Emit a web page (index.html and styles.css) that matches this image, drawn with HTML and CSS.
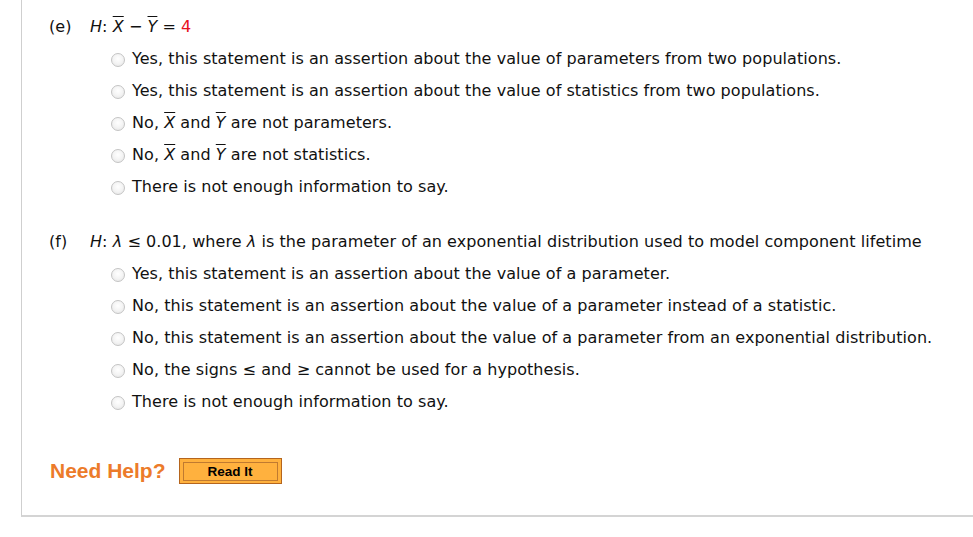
FILE: index.html
```html
<!DOCTYPE html>
<html>
<head>
<meta charset="utf-8">
<link rel="stylesheet" href="styles.css">
</head>
<body>
<div class="panel">
  <div class="part">
    <div class="q"><span class="lbl">(e)</span><span><i>H</i>: <i class="ov">X</i> &minus; <i class="ov">Y</i> = <span class="red">4</span></span></div>
    <div class="opts">
      <div class="opt"><span class="radio"></span><span>Yes, this statement is an assertion about the value of parameters from two populations.</span></div>
      <div class="opt"><span class="radio"></span><span>Yes, this statement is an assertion about the value of statistics from two populations.</span></div>
      <div class="opt"><span class="radio"></span><span>No, <i class="ov">X</i> and <i class="ov">Y</i> are not parameters.</span></div>
      <div class="opt"><span class="radio"></span><span>No, <i class="ov">X</i> and <i class="ov">Y</i> are not statistics.</span></div>
      <div class="opt"><span class="radio"></span><span>There is not enough information to say.</span></div>
    </div>
  </div>
  <div class="part part-f">
    <div class="q"><span class="lbl">(f)</span><span><i>H</i>: <i>&lambda;</i> &le; 0.01, where <i>&lambda;</i> is the parameter of an exponential distribution used to model component lifetime</span></div>
    <div class="opts">
      <div class="opt"><span class="radio"></span><span>Yes, this statement is an assertion about the value of a parameter.</span></div>
      <div class="opt"><span class="radio"></span><span>No, this statement is an assertion about the value of a parameter instead of a statistic.</span></div>
      <div class="opt"><span class="radio"></span><span>No, this statement is an assertion about the value of a parameter from an exponential distribution.</span></div>
      <div class="opt"><span class="radio"></span><span>No, the signs &le; and &ge; cannot be used for a hypothesis.</span></div>
      <div class="opt"><span class="radio"></span><span>There is not enough information to say.</span></div>
    </div>
  </div>
  <div class="help">
    <span class="need">Need Help?</span>
    <span class="btn"><span class="btn-in">Read It</span></span>
  </div>
</div>
</body>
</html>
```
FILE: styles.css
```css
html, body {
  margin: 0;
  padding: 0;
  background: #fff;
}
.panel {
  margin-left: 21px;
  height: 517px;
  box-sizing: border-box;
  border-left: 1px solid #cfcfcf;
  border-bottom: 2px solid #d4d4d4;
  padding: 10px 0 0 27px;
  font-family: "DejaVu Sans", Verdana, sans-serif;
  font-size: 16px;
  letter-spacing: 0.06px;
  color: #111;
}
.q, .opt {
  height: 32px;
  display: flex;
  align-items: center;
  white-space: nowrap;
}
.lbl {
  width: 41px;
}
.opts {
  padding-left: 62px;
}
.opt {
  gap: 7px;
}
.radio {
  width: 12px;
  height: 12px;
  border-radius: 50%;
  border: 1px solid #c4c4c4;
  background: radial-gradient(circle at 50% 40%, #ffffff 0%, #f4f4f4 50%, #e2e2e2 100%);
  flex: none;
  margin-top: 3px;
}
.ov {
  text-decoration: overline;
}
.red {
  color: #e8101e;
}
.part-f {
  margin-top: 23px;
}
.help {
  margin-top: 38px;
  height: 32px;
  display: flex;
  align-items: center;
  gap: 13px;
  padding-left: 1px;
}
.need {
  font-family: "Liberation Sans", Arial, sans-serif;
  font-weight: bold;
  font-size: 21px;
  letter-spacing: 0;
  color: #ec7b2a;
}
.btn {
  display: flex;
  width: 103px;
  height: 26px;
  box-sizing: border-box;
  border: 1px solid #b5651d;
  background: #ffb13e;
  padding: 3px 3px 2px 3px;
}
.btn-in {
  flex: 1;
  border: 1px solid #c07a30;
  display: flex;
  align-items: center;
  justify-content: center;
  font-family: "Liberation Sans", Arial, sans-serif;
  font-weight: bold;
  font-size: 13.5px;
  letter-spacing: 0;
  color: #000;
}
```
